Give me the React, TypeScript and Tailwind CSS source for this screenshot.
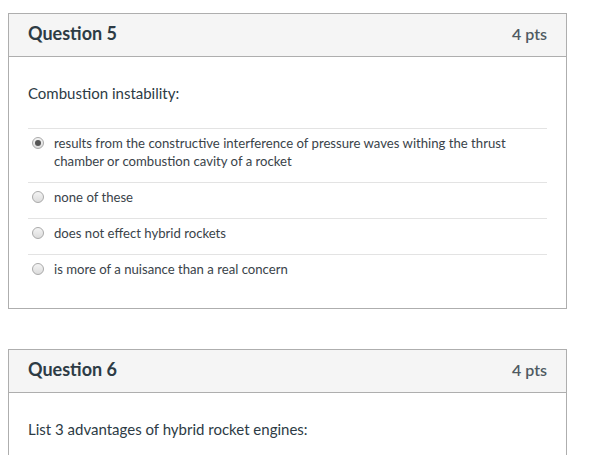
import React from "react";

type Option = { text: string; selected?: boolean };

const Q5_OPTIONS: Option[] = [
  {
    text: "results from the constructive interference of pressure waves withing the thrust chamber or combustion cavity of a rocket",
    selected: true,
  },
  { text: "none of these" },
  { text: "does not effect hybrid rockets" },
  { text: "is more of a nuisance than a real concern" },
];

function Radio({ selected }: { selected?: boolean }) {
  return (
    <span className="mt-[3px] flex h-[12px] w-[12px] flex-shrink-0 items-center justify-center rounded-full border border-[#a9a9a9] bg-gradient-to-b from-[#f4f4f4] to-[#dcdcdc]">
      {selected && <span className="h-[6px] w-[6px] rounded-full bg-[#555]" />}
    </span>
  );
}

function QuestionCard({ title, pts, children }: { title: string; pts: string; children: React.ReactNode }) {
  return (
    <div className="w-[559px] border border-[#aeaeae] bg-white">
      <div className="flex h-[43px] items-center justify-between border-b border-[#aeaeae] bg-[#f5f5f5] px-[19px] pb-[4px]">
        <h2 className="text-[18px] font-bold text-[#2d3b45]">{title}</h2>
        <span className="pt-[2px] text-[16px] font-semibold text-[#4f5a62]">{pts}</span>
      </div>
      {children}
    </div>
  );
}

export default function App() {
  return (
    <div className="min-h-[455px] bg-white pl-[8px] pt-[13px] font-['Lato',sans-serif] text-[#2d3b45]">
      <QuestionCard title="Question 5" pts="4 pts">
        <div className="px-[19px] pb-[18px] pt-[25px]">
          <p className="text-[15px] leading-[22px]">Combustion instability:</p>
          <div className="mt-[24px]">
            {Q5_OPTIONS.map((o, i) => (
              <div key={i} className="flex gap-[10px] border-t border-[#e3e3e3] pb-[12px] pl-[4px] pt-[5px]">
                <Radio selected={o.selected} />
                <span className="text-[13.15px] leading-[18px] text-[#3a434a]">{o.text}</span>
              </div>
            ))}
          </div>
        </div>
      </QuestionCard>

      <div className="mt-[40px]">
        <QuestionCard title="Question 6" pts="4 pts">
          <div className="px-[19px] pb-[30px] pt-[25px]">
            <p className="text-[15px] leading-[22px]">List 3 advantages of hybrid rocket engines:</p>
          </div>
        </QuestionCard>
      </div>
    </div>
  );
}
